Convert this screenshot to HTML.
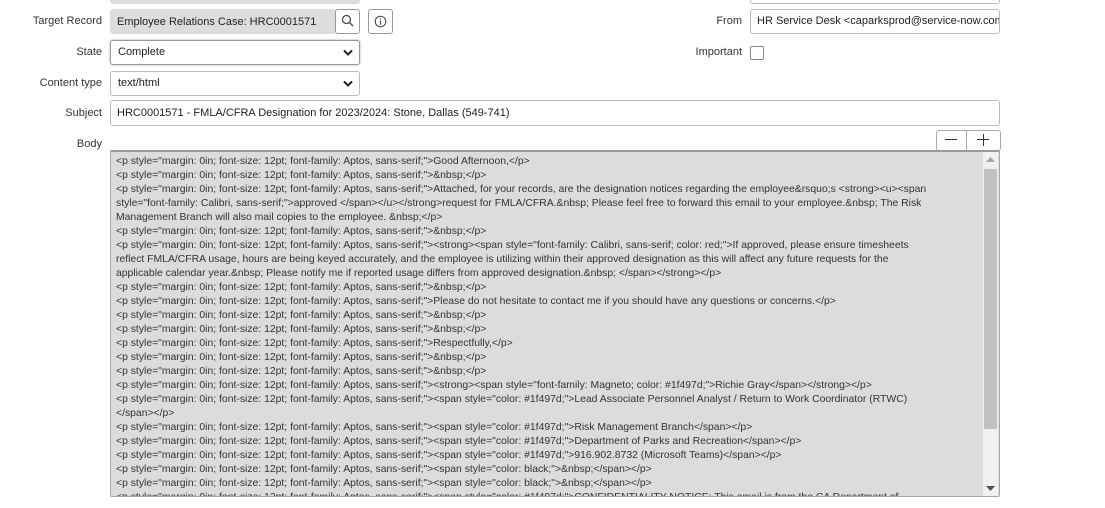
<!DOCTYPE html>
<html><head><meta charset="utf-8"><style>
body{margin:0;width:1105px;height:508px;background:#fff;font-family:"Liberation Sans",sans-serif;color:#333;position:relative;overflow:hidden;font-size:11px}
.a{position:absolute}
.lbl{position:absolute;text-align:right;font-size:11px;color:#333}
.inp{position:absolute;box-sizing:border-box;border:1px solid #bbb;border-radius:3px;background:#fff;padding-left:7px;font-size:11px;line-height:22px;color:#222;white-space:nowrap;overflow:hidden}
.ro{background:#ddd;border-color:#ddd}
.sel svg{position:absolute;right:6px;top:8px}
.ta{position:absolute;left:110px;top:150px;width:890px;height:347px;box-sizing:border-box;border:1px solid #aaa;border-top:2px solid #999;background:#dcdcdc;overflow:hidden;border-radius:2px}
.ta pre{margin:0;position:absolute;left:5px;top:3px;font-family:"Liberation Sans",sans-serif;font-size:10.4px;line-height:14px;color:#333;white-space:pre;letter-spacing:0}
.sb{position:absolute;right:1px;top:0;width:15px;height:345px;background:#f1f1f1}
</style></head><body>
<div class="inp ro" style="left:110px;top:-20px;width:250px;height:24px"></div>
<div class="inp" style="left:750px;top:-20px;width:250px;height:24px"></div>

<div class="lbl" style="left:0;width:102px;top:15px">Target Record</div>
<div class="inp ro" style="left:110px;top:9px;width:226px;height:25px;line-height:25px;padding-left:6px">Employee Relations Case: HRC0001571</div>
<div class="inp" style="left:335px;top:9px;width:25px;height:25px;border-color:#999"><svg class="a" style="left:5px;top:4px" width="13" height="13" viewBox="0 0 13 13"><circle cx="5.5" cy="5.5" r="4" fill="none" stroke="#444" stroke-width="1.2"/><path d="M8.5 8.5L12 12" stroke="#444" stroke-width="1.3"/></svg></div>
<div class="inp" style="left:368px;top:9px;width:25px;height:25px;border-color:#999"><svg class="a" style="left:5px;top:5px" width="13" height="13" viewBox="0 0 13 13"><circle cx="6.5" cy="6.5" r="5.3" fill="none" stroke="#444" stroke-width="1"/><path d="M6.5 5.5V9.8M6.5 3.3V4.4" stroke="#444" stroke-width="1.1"/></svg></div>

<div class="lbl" style="left:0;width:102px;top:46px">State</div>
<div class="inp sel" style="left:110px;top:40px;width:250px;height:25px;line-height:23px;border-color:#999;box-shadow:0 0 2px #9ab">Complete<svg width="10" height="7" viewBox="0 0 10 7"><path d="M1 1.5L5 5.5L9 1.5" fill="none" stroke="#222" stroke-width="2"/></svg></div>

<div class="lbl" style="left:0;width:102px;top:77px">Content type</div>
<div class="inp sel" style="left:110px;top:71px;width:250px;height:25px;line-height:23px">text/html<svg width="10" height="7" viewBox="0 0 10 7"><path d="M1 1.5L5 5.5L9 1.5" fill="none" stroke="#222" stroke-width="2"/></svg></div>

<div class="lbl" style="left:0;width:102px;top:107px">Subject</div>
<div class="inp" style="left:110px;top:100px;width:890px;height:26px;line-height:24px;padding-left:6px">HRC0001571 - FMLA/CFRA Designation for 2023/2024: Stone, Dallas (549-741)</div>

<div class="lbl" style="left:660px;width:82px;top:15px">From</div>
<div class="inp" style="left:750px;top:9px;width:250px;height:25px;line-height:23px;padding-left:6px">HR Service Desk &lt;caparksprod@service-now.com&gt;</div>
<div class="lbl" style="left:660px;width:82px;top:46px">Important</div>
<div class="a" style="left:750px;top:46px;width:12px;height:12px;border:1px solid #888;border-radius:2px"></div>

<div class="lbl" style="left:0;width:102px;top:138px">Body</div>
<div class="a" style="left:936px;top:130px;width:63px;height:19px;border:1px solid #aaa;border-radius:3px"></div>
<div class="a" style="left:966px;top:130px;width:1px;height:21px;background:#aaa"></div>
<div class="a" style="left:945px;top:139px;width:12px;height:1.3px;background:#333"></div>
<div class="a" style="left:977px;top:139px;width:12px;height:1.3px;background:#333"></div>
<div class="a" style="left:982.5px;top:134px;width:1.3px;height:12px;background:#333"></div>

<div class="ta"><pre>&lt;p style="margin: 0in; font-size: 12pt; font-family: Aptos, sans-serif;"&gt;Good Afternoon,&lt;/p&gt;
&lt;p style="margin: 0in; font-size: 12pt; font-family: Aptos, sans-serif;"&gt;&amp;nbsp;&lt;/p&gt;
&lt;p style="margin: 0in; font-size: 12pt; font-family: Aptos, sans-serif;"&gt;Attached, for your records, are the designation notices regarding the employee&amp;rsquo;s &lt;strong&gt;&lt;u&gt;&lt;span
style="font-family: Calibri, sans-serif;"&gt;approved &lt;/span&gt;&lt;/u&gt;&lt;/strong&gt;request for FMLA/CFRA.&amp;nbsp; Please feel free to forward this email to your employee.&amp;nbsp; The Risk
Management Branch will also mail copies to the employee. &amp;nbsp;&lt;/p&gt;
&lt;p style="margin: 0in; font-size: 12pt; font-family: Aptos, sans-serif;"&gt;&amp;nbsp;&lt;/p&gt;
&lt;p style="margin: 0in; font-size: 12pt; font-family: Aptos, sans-serif;"&gt;&lt;strong&gt;&lt;span style="font-family: Calibri, sans-serif; color: red;"&gt;If approved, please ensure timesheets
reflect FMLA/CFRA usage, hours are being keyed accurately, and the employee is utilizing within their approved designation as this will affect any future requests for the
applicable calendar year.&amp;nbsp; Please notify me if reported usage differs from approved designation.&amp;nbsp; &lt;/span&gt;&lt;/strong&gt;&lt;/p&gt;
&lt;p style="margin: 0in; font-size: 12pt; font-family: Aptos, sans-serif;"&gt;&amp;nbsp;&lt;/p&gt;
&lt;p style="margin: 0in; font-size: 12pt; font-family: Aptos, sans-serif;"&gt;Please do not hesitate to contact me if you should have any questions or concerns.&lt;/p&gt;
&lt;p style="margin: 0in; font-size: 12pt; font-family: Aptos, sans-serif;"&gt;&amp;nbsp;&lt;/p&gt;
&lt;p style="margin: 0in; font-size: 12pt; font-family: Aptos, sans-serif;"&gt;&amp;nbsp;&lt;/p&gt;
&lt;p style="margin: 0in; font-size: 12pt; font-family: Aptos, sans-serif;"&gt;Respectfully,&lt;/p&gt;
&lt;p style="margin: 0in; font-size: 12pt; font-family: Aptos, sans-serif;"&gt;&amp;nbsp;&lt;/p&gt;
&lt;p style="margin: 0in; font-size: 12pt; font-family: Aptos, sans-serif;"&gt;&amp;nbsp;&lt;/p&gt;
&lt;p style="margin: 0in; font-size: 12pt; font-family: Aptos, sans-serif;"&gt;&lt;strong&gt;&lt;span style="font-family: Magneto; color: #1f497d;"&gt;Richie Gray&lt;/span&gt;&lt;/strong&gt;&lt;/p&gt;
&lt;p style="margin: 0in; font-size: 12pt; font-family: Aptos, sans-serif;"&gt;&lt;span style="color: #1f497d;"&gt;Lead Associate Personnel Analyst / Return to Work Coordinator (RTWC)
&lt;/span&gt;&lt;/p&gt;
&lt;p style="margin: 0in; font-size: 12pt; font-family: Aptos, sans-serif;"&gt;&lt;span style="color: #1f497d;"&gt;Risk Management Branch&lt;/span&gt;&lt;/p&gt;
&lt;p style="margin: 0in; font-size: 12pt; font-family: Aptos, sans-serif;"&gt;&lt;span style="color: #1f497d;"&gt;Department of Parks and Recreation&lt;/span&gt;&lt;/p&gt;
&lt;p style="margin: 0in; font-size: 12pt; font-family: Aptos, sans-serif;"&gt;&lt;span style="color: #1f497d;"&gt;916.902.8732 (Microsoft Teams)&lt;/span&gt;&lt;/p&gt;
&lt;p style="margin: 0in; font-size: 12pt; font-family: Aptos, sans-serif;"&gt;&lt;span style="color: black;"&gt;&amp;nbsp;&lt;/span&gt;&lt;/p&gt;
&lt;p style="margin: 0in; font-size: 12pt; font-family: Aptos, sans-serif;"&gt;&lt;span style="color: black;"&gt;&amp;nbsp;&lt;/span&gt;&lt;/p&gt;
&lt;p style="margin: 0in; font-size: 12pt; font-family: Aptos, sans-serif;"&gt;&lt;span style="color: #1f497d;"&gt;CONFIDENTIALITY NOTICE: This email is from the CA Department of</pre>
<div class="sb"><div class="a" style="left:1px;top:17px;width:13px;height:260px;background:#c1c1c1"></div>
<svg class="a" style="left:3px;top:5px" width="9" height="5"><path d="M0 5L4.5 0L9 5Z" fill="#a3a3a3"/></svg>
<svg class="a" style="left:3px;top:334px" width="9" height="5"><path d="M0 0L4.5 5L9 0Z" fill="#505050"/></svg></div>
</div>
</body></html>
